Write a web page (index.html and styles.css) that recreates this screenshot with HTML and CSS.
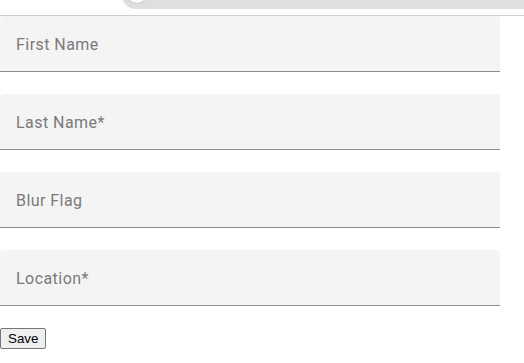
FILE: index.html
```html
<!DOCTYPE html>
<html lang="en">
<head>
    <meta charset="UTF-8">
    <meta name="viewport" content="width=device-width, initial-scale=1.0">
    <title>Profile</title>
    <link rel="stylesheet" href="styles.css">
</head>
<body>
    <div class="topbar">
        <div class="search-pill">
            <span class="knob"></span>
        </div>
    </div>

    <form class="profile-form">
        <div class="field">
            <input type="text" placeholder="First Name">
        </div>
        <div class="field">
            <input type="text" placeholder="Last Name*">
        </div>
        <div class="field">
            <input type="text" placeholder="Blur Flag">
        </div>
        <div class="field">
            <input type="text" placeholder="Location*">
        </div>
        <button type="button" class="save-btn">Save</button>
    </form>
</body>
</html>
```

FILE: styles.css
```css
* {
    box-sizing: border-box;
}

body {
    margin: 0;
    background: #ffffff;
    font-family: 'Roboto', 'Liberation Sans', sans-serif;
    overflow: hidden;
}

.topbar {
    height: 16px;
    border-bottom: 1px solid #cfcfcf;
    overflow: hidden;
}

.search-pill {
    margin-left: 122px;
    margin-top: -20px;
    height: 29px;
    padding: 3px 0 0 5px;
    background: #dfdfdf;
    border-radius: 14px 0 0 14px;
}

.knob {
    display: block;
    width: 20px;
    height: 20px;
    border-radius: 50%;
    background: #ffffff;
    box-shadow: 0 0 0 1px #cfcfcf;
}

.profile-form {
    display: flex;
    flex-direction: column;
    align-items: flex-start;
    gap: 22px;
}

.field {
    width: 500px;
    height: 56px;
    background: #f4f4f4;
    border-bottom: 1px solid #8e8e8e;
    border-radius: 4px 4px 0 0;
}

.field input {
    width: 100%;
    height: 100%;
    border: none;
    outline: none;
    background: transparent;
    padding: 2px 16px 0;
    font-family: 'Roboto', sans-serif;
    font-size: 16px;
    color: #333;
}

.field input::placeholder {
    color: #7a7a7a;
    opacity: 1;
    letter-spacing: 0.45px;
}

.save-btn {
    font-family: 'Liberation Sans', Arial, sans-serif;
    font-size: 13.333px;
    padding: 2px 7px;
    margin: 0;
    background: #efefef;
    border: 1px solid #767676;
    border-radius: 2px;
    color: #000;
}
```
